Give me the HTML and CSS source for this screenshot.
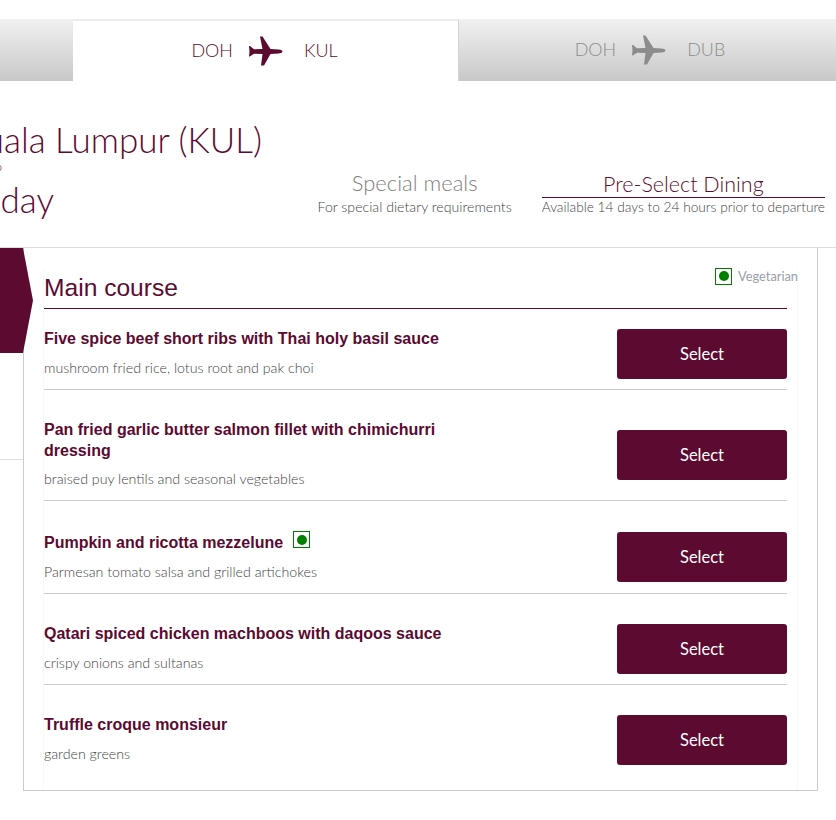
FILE: index.html
```html
<!DOCTYPE html>
<html lang="en">
<head>
<meta charset="utf-8">
<title>Pre-Select Dining</title>
<link rel="stylesheet" href="styles.css">
</head>
<body>
<svg class="defs" width="0" height="0" aria-hidden="true">
  <symbol id="plane" viewBox="0 0 34 30">
    <path d="M33.500 15.500c0 1.200-2 2-4 2L21.500 18 15 29.500 12 29.500 13.500 18 5 17.800 .8 20.500 0 20.500 .5 15.500 0 10 1 10 5 13.300 13.500 13 11 .5 13.500 .5 21.500 13 29.500 13.500c2 .1 4 .8 4 2z"/>
  </symbol>
</svg>

<nav class="tabs">
  <div class="tab tab-stub"></div>
  <a class="tab tab-active">
    <span>DOH</span>
    <svg class="plane"><use href="#plane"/></svg>
    <span>KUL</span>
  </a>
  <a class="tab tab-idle">
    <span>DOH</span>
    <svg class="plane"><use href="#plane"/></svg>
    <span>DUB</span>
  </a>
</nav>

<header class="head">
  <div class="route">
    <div class="route-line">Kuala Lumpur (KUL)</div>
    <div class="route-small">to</div>
    <div class="route-line route-day">day</div>
  </div>
  <div class="options">
    <div class="option">
      <div class="option-name">Special meals</div>
      <div class="option-note">For special dietary requirements</div>
    </div>
    <div class="option option-on">
      <div class="option-name">Pre-Select Dining</div>
      <div class="option-note">Available 14 days to 24 hours prior to departure</div>
    </div>
  </div>
</header>

<main class="body">
  <aside class="side">
    <div class="side-item">
      <div class="side-arrow"></div>
    </div>
  </aside>
  <section class="panel">
    <div class="menu">
      <div class="menu-head">
        <h2 class="menu-title">Main course</h2>
        <div class="legend"><span class="veg"></span><span>Vegetarian</span></div>
      </div>

      <div class="dish dish-first">
        <div class="dish-text">
          <h3 class="dish-name">Five spice beef short ribs with Thai holy basil sauce</h3>
          <p class="dish-desc">mushroom fried rice, lotus root and pak choi</p>
        </div>
        <button class="select">Select</button>
      </div>

      <div class="dish dish-wrap">
        <div class="dish-text">
          <h3 class="dish-name">Pan fried garlic butter salmon fillet with chimichurri dressing</h3>
          <p class="dish-desc">braised puy lentils and seasonal vegetables</p>
        </div>
        <button class="select">Select</button>
      </div>

      <div class="dish dish-veg">
        <div class="dish-text">
          <h3 class="dish-name"><span>Pumpkin and ricotta mezzelune</span><span class="veg"></span></h3>
          <p class="dish-desc">Parmesan tomato salsa and grilled artichokes</p>
        </div>
        <button class="select">Select</button>
      </div>

      <div class="dish">
        <div class="dish-text">
          <h3 class="dish-name">Qatari spiced chicken machboos with daqoos sauce</h3>
          <p class="dish-desc">crispy onions and sultanas</p>
        </div>
        <button class="select">Select</button>
      </div>

      <div class="dish dish-last">
        <div class="dish-text">
          <h3 class="dish-name">Truffle croque monsieur</h3>
          <p class="dish-desc">garden greens</p>
        </div>
        <button class="select">Select</button>
      </div>
    </div>
  </section>
</main>
</body>
</html>
```
FILE: styles.css
```css
* { box-sizing: border-box; }
html, body { margin: 0; padding: 0; background: #fff; }
body { font-family: Lato, "Open Sans", sans-serif; font-weight: 300; color: #5c0a30; overflow-x: hidden; }
.defs { position: absolute; }

.tabs { display: flex; height: 62px; margin-top: 19px; }
.tab { display: flex; align-items: center; justify-content: center; font-size: 18px; background: linear-gradient(#f1f1f1, #c8c8c8); }
.tab span { margin-bottom: 2px; }
.tab-stub { width: 73px; }
.tab-active { width: 386px; background: #fff; border-top: 2px solid #ececec; border-right: 1px solid #d4d4d4; color: #5c0a30; padding-right: 2px; }
.tab-idle { flex: 1; color: #8c8c8c; padding-left: 5px; }
.plane { width: 34px; height: 30px; margin: 0 21px 0 16px; fill: currentColor; flex: none; }

.head { display: flex; height: 167px; border-bottom: 1px solid #ddd; padding-right: 11px; }
.route { width: 262px; display: flex; flex-direction: column; align-items: flex-end; overflow: hidden; padding-top: 37px; flex: none; }
.route-line { font-size: 35px; line-height: 42px; white-space: nowrap; }
.route-small { font-size: 12px; line-height: 14px; width: 2px; direction: rtl; height: 14px; margin-right: 260px; }
.route-day { margin-right: 208px; margin-top: 4px; }
.options { flex: 1; display: flex; justify-content: flex-end; align-items: flex-start; gap: 30px; padding-top: 90px; }
.option { text-align: center; }
.option-name { font-size: 22px; line-height: 24px; color: #808080; }
.option-note { font-size: 14.15px; line-height: 20px; margin-top: 2px; color: #444; }
.option-on .option-name { font-size: 21.5px; color: #5c0a30; border-bottom: 1px solid #5c0a30; line-height: 25px; padding-top: 1px; height: 27px; }
.option-on .option-note { font-size: 13.7px; line-height: 18px; margin-top: 0; }

.body { display: flex; padding-right: 18px; }
.side { width: 23px; flex: none; }
.side-item { position: relative; height: 212px; border-bottom: 1px solid #ddd; }
.side-arrow { position: absolute; left: 0; top: 0; width: 33px; height: 105px; background: #5c0a30; clip-path: polygon(0 0, 23px 0, 33px 52.5px, 23px 100%, 0 100%); }
.panel { flex: 1; border: 1px solid #ccc; border-top: 0; padding: 21px 19px 0; }
.menu { border-left: 1px solid #f8f8f8; border-right: 1px solid #f8f8f8; padding-right: 10px; }
.menu-head { display: flex; justify-content: space-between; height: 40px; border-bottom: 1px solid #5c0a30; }
.menu-title { margin: 0; font: 400 24.6px/38px "Liberation Sans", Arial, sans-serif; color: #5c0a30; }
.legend { display: flex; align-items: center; gap: 6px; height: 18px; margin-right: -11px; margin-top: -2px; font-size: 12.8px; color: #98a0aa; font-weight: 400; }
.veg { display: block; width: 17px; height: 17px; border: 1px solid #007a00; position: relative; flex: none; }
.veg::after { content: ""; position: absolute; left: 2.5px; top: 2.5px; width: 10px; height: 10px; border-radius: 50%; background: #008000; }

.dish { display: flex; align-items: center; justify-content: space-between; padding: 29px 0 9px; border-bottom: 1px solid #ccc; }
.dish-first { padding-top: 19px; }
.dish-veg { padding-top: 31px; padding-bottom: 11px; }
.dish-last { border-bottom: 0; padding-bottom: 24px; }
.dish-text { width: 420px; padding-bottom: 2px; }
.dish-wrap { padding-bottom: 10px; }
.dish-wrap .dish-text { padding-bottom: 1px; }
.dish-wrap .dish-desc { margin-top: 8px; }
.dish-veg .dish-text { padding-bottom: 0; }
.dish-name { margin: 0; font: 700 16px/21px "Liberation Sans", Arial, sans-serif; color: #5c0a30; }
.dish-veg .dish-name { display: flex; gap: 10px; }
.dish-veg .veg { margin-top: -1px; }
.dish-desc { margin: 9px 0 0; font-size: 14.2px; line-height: 20px; color: #444; }
.select { width: 170px; height: 50px; flex: none; border: 0; border-radius: 3px; padding: 0; background: #5c0a30; color: #fff; font: 400 16.5px Lato, "Open Sans", sans-serif; }
```
